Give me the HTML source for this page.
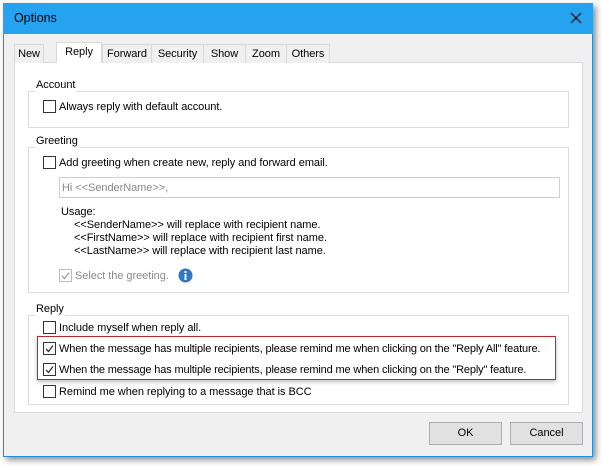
<!DOCTYPE html>
<html><head><style>
*{box-sizing:border-box;margin:0;padding:0}
body{width:602px;height:467px;background:#fff;font-family:"Liberation Sans",sans-serif;font-size:11px;letter-spacing:-0.05px;color:#000;position:relative;overflow:hidden}
.a{position:absolute}
.win{left:3px;top:3px;width:590px;height:454px;background:#f0f0f0;border:1px solid #1e8fd8;box-shadow:3px 3px 6px rgba(0,0,0,.45)}
.title{left:3px;top:3px;width:590px;height:31px;background:#25a3ef}
.tab{top:44px;height:19px;border:1px solid #d9d9d9;border-bottom:none;background:#f0f0f0;text-align:center;line-height:18px}
.panel{left:14px;top:62px;width:569px;height:351px;background:#fff;border:1px solid #d9d9d9}
.grp{border:1px solid #dcdcdc}
.leg{background:#fff;padding:0 1px;line-height:14px}
.cb{width:13px;height:13px;border:1px solid #333;background:#fff}
.t{white-space:nowrap;line-height:14px}
.btn{top:422px;height:23px;background:#e1e1e1;border:1px solid #adadad;text-align:center;line-height:21px}
</style></head><body>
<div class="a win"></div>
<div class="a title"></div>
<div class="a t" style="left:14px;top:11px;font-size:12.5px">Options</div>
<svg class="a" style="left:570px;top:12px" width="12" height="12"><path d="M1 1L11 11M11 1L1 11" stroke="#000" stroke-width="1.2"/></svg>

<div class="a panel"></div>
<div class="a tab" style="left:14px;width:30px">New</div>
<div class="a tab" style="left:102px;width:50px">Forward</div>
<div class="a tab" style="left:151px;width:53px">Security</div>
<div class="a tab" style="left:203px;width:43px">Show</div>
<div class="a tab" style="left:245px;width:42px">Zoom</div>
<div class="a tab" style="left:286px;width:44px">Others</div>
<div class="a tab" style="left:56px;top:42px;height:21px;width:46px;background:#fff;line-height:18px">Reply</div>

<div class="a grp" style="left:28px;top:91px;width:541px;height:37px"></div>
<div class="a leg" style="left:35px;top:78px">Account</div>
<div class="a cb" style="left:43px;top:100px"></div>
<div class="a t" style="left:59px;top:100px">Always reply with default account.</div>

<div class="a grp" style="left:28px;top:147px;width:541px;height:146px"></div>
<div class="a leg" style="left:35px;top:134px">Greeting</div>
<div class="a cb" style="left:43px;top:156px"></div>
<div class="a t" style="left:59px;top:156px">Add greeting when create new, reply and forward email.</div>
<div class="a" style="left:59px;top:177px;width:501px;height:21px;border:1px solid #cfcfcf"></div>
<div class="a t" style="left:62px;top:181px;color:#8a8a8a">Hi &lt;&lt;SenderName&gt;&gt;,</div>
<div class="a t" style="left:61px;top:205px">Usage:</div>
<div class="a t" style="left:74px;top:218px">&lt;&lt;SenderName&gt;&gt; will replace with recipient name.</div>
<div class="a t" style="left:74px;top:231px">&lt;&lt;FirstName&gt;&gt; will replace with recipient first name.</div>
<div class="a t" style="left:74px;top:244px">&lt;&lt;LastName&gt;&gt; will replace with recipient last name.</div>
<div class="a cb" style="left:59px;top:269px;border-color:#bcbcbc"></div>
<svg class="a" style="left:59px;top:269px" width="13" height="13"><path d="M3 7L5.5 9.5L10 3.5" stroke="#a0a0a0" fill="none" stroke-width="1.3"/></svg>
<div class="a t" style="left:75px;top:269px;color:#8a8a8a">Select the greeting.</div>
<svg class="a" style="left:178px;top:268px" width="15" height="15"><circle cx="7.5" cy="7.5" r="7" fill="#2f79c3"/><rect x="6.5" y="6" width="2" height="6" fill="#fff"/><rect x="6.5" y="3" width="2" height="2" fill="#fff"/></svg>

<div class="a grp" style="left:28px;top:315px;width:541px;height:90px"></div>
<div class="a leg" style="left:35px;top:302px">Reply</div>
<div class="a cb" style="left:43px;top:321px"></div>
<div class="a t" style="left:59px;top:321px">Include myself when reply all.</div>
<div class="a" style="left:37px;top:336px;width:519px;height:44px;border:1px solid #b5262d;box-shadow:0 2px 4px rgba(0,0,0,.25)"></div>
<div class="a cb" style="left:43px;top:342px"></div>
<svg class="a" style="left:43px;top:342px" width="13" height="13"><path d="M3 7L5.5 9.5L10 3.5" stroke="#333" fill="none" stroke-width="1.3"/></svg>
<div class="a t" style="left:59px;top:342px;letter-spacing:-0.15px">When the message has multiple recipients, please remind me when clicking on the "Reply All" feature.</div>
<div class="a cb" style="left:43px;top:363px"></div>
<svg class="a" style="left:43px;top:363px" width="13" height="13"><path d="M3 7L5.5 9.5L10 3.5" stroke="#333" fill="none" stroke-width="1.3"/></svg>
<div class="a t" style="left:59px;top:363px;letter-spacing:-0.15px">When the message has multiple recipients, please remind me when clicking on the "Reply" feature.</div>
<div class="a cb" style="left:43px;top:385px"></div>
<div class="a t" style="left:59px;top:385px">Remind me when replying to a message that is BCC</div>

<div class="a btn" style="left:429px;width:73px">OK</div>
<div class="a btn" style="left:510px;width:73px">Cancel</div>
</body></html>
